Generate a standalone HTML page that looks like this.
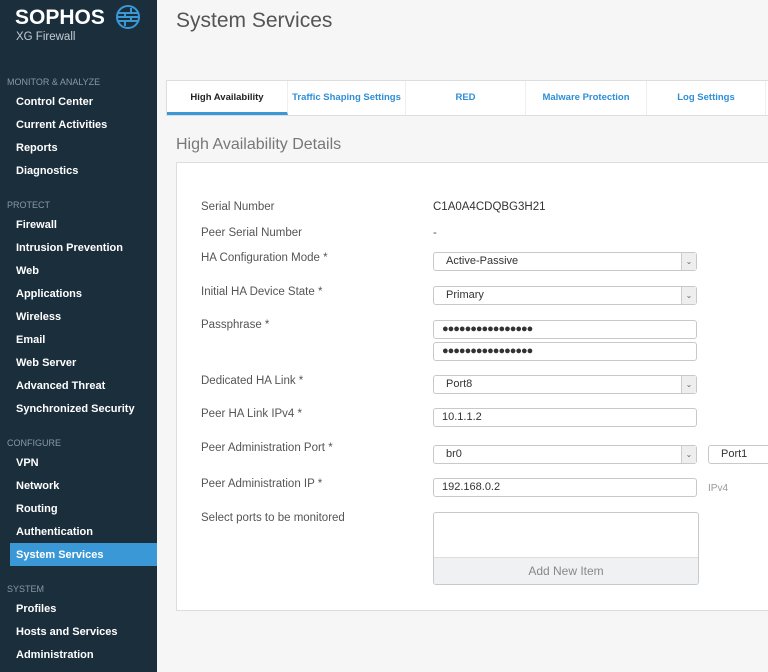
<!DOCTYPE html>
<html><head><style>
*{margin:0;padding:0;box-sizing:border-box}
body{width:768px;height:672px;overflow:hidden;background:#f6f6f6;font-family:"Liberation Sans",sans-serif;position:relative}
#sb{position:absolute;left:0;top:0;width:157px;height:672px;background:#1b2e3c}
.logo{position:absolute;left:15px;top:6px;color:#fff;font-weight:bold;font-size:21px;letter-spacing:0px}
.sub{position:absolute;left:16px;top:31px;color:#c5ccd2;font-size:11.5px}
.sh{position:absolute;left:7px;color:#8a98a4;font-size:9px}
.it{position:absolute;left:16px;color:#fff;font-size:11px;font-weight:bold}
.act{position:absolute;left:10px;top:543px;width:147px;height:23px;background:#3b98d7}
.t{position:absolute;color:#555;font-size:11.5px}
h1{position:absolute;left:176px;top:9px;font-weight:normal;font-size:21px;color:#555}
#tabs{position:absolute;left:166px;top:80px;width:610px;height:36px;background:#fff;border:1px solid #ddd}
.tab{position:absolute;top:0;height:34px;line-height:34px;text-align:center;font-size:9.5px;color:#2e8fd6;font-weight:bold;border-right:1px solid #eee}
h2{position:absolute;left:176px;top:136px;font-weight:normal;font-size:16px;color:#777}
#panel{position:absolute;left:176px;top:162px;width:600px;height:449px;background:#fff;border:1px solid #ddd}
.in{position:absolute;height:19px;border:1px solid #c9c9c9;border-radius:3px;background:#fff;font-size:11px;color:#333;line-height:17px;padding-left:12px}
.in.sel .ar{position:absolute;right:0;top:0;width:15px;height:17px;background:#eee;border-left:1px solid #ccc;font-size:8px;text-align:center;color:#666}
.dots{padding-left:8px;letter-spacing:-1px;font-size:11px}
</style></head><body>
<div id="sb">
<div class="logo">SOPHOS</div>
<svg style="position:absolute;left:115px;top:4px" width="26" height="26" viewBox="0 0 26 26" fill="none" stroke="#3b98d7" stroke-width="2"><circle cx="13" cy="13" r="11"/><path d="M3 9h20M2 13h22M3 17h20M10 9v4M16 13v4M10 17v5M16 4v5"/></svg>
<div class="sub">XG Firewall</div>
<div class="sh" style="top:77px">MONITOR &amp; ANALYZE</div>
<div class="it" style="top:96px">Control Center</div>
<div class="it" style="top:119px">Current Activities</div>
<div class="it" style="top:142px">Reports</div>
<div class="it" style="top:165px">Diagnostics</div>
<div class="sh" style="top:200px">PROTECT</div>
<div class="it" style="top:219px">Firewall</div>
<div class="it" style="top:242px">Intrusion Prevention</div>
<div class="it" style="top:265px">Web</div>
<div class="it" style="top:288px">Applications</div>
<div class="it" style="top:311px">Wireless</div>
<div class="it" style="top:334px">Email</div>
<div class="it" style="top:357px">Web Server</div>
<div class="it" style="top:380px">Advanced Threat</div>
<div class="it" style="top:403px">Synchronized Security</div>
<div class="sh" style="top:438px">CONFIGURE</div>
<div class="it" style="top:457px">VPN</div>
<div class="it" style="top:480px">Network</div>
<div class="it" style="top:503px">Routing</div>
<div class="it" style="top:526px">Authentication</div>
<div class="act"></div>
<div class="it" style="top:549px">System Services</div>
<div class="sh" style="top:584px">SYSTEM</div>
<div class="it" style="top:603px">Profiles</div>
<div class="it" style="top:626px">Hosts and Services</div>
<div class="it" style="top:649px">Administration</div>
</div>
<h1>System Services</h1>
<div id="tabs">
<div class="tab" style="left:0;width:121px;color:#222;border-bottom:3px solid #3b98d7">High Availability</div>
<div class="tab" style="left:121px;width:118px">Traffic Shaping Settings</div>
<div class="tab" style="left:239px;width:120px">RED</div>
<div class="tab" style="left:359px;width:121px">Malware Protection</div>
<div class="tab" style="left:480px;width:119px">Log Settings</div>
</div>
<h2>High Availability Details</h2>
<div id="panel"></div>
<div class="t" style="left:201px;top:201px">Serial Number</div>
<div class="t" style="left:433px;top:201px;color:#333">C1A0A4CDQBG3H21</div>
<div class="t" style="left:201px;top:227px">Peer Serial Number</div>
<div class="t" style="left:433px;top:227px">-</div>
<div class="t" style="left:201px;top:252px">HA Configuration Mode *</div>
<div class="in sel" style="left:433px;top:252px;width:264px">Active-Passive<span class="ar">&#8964;</span></div>
<div class="t" style="left:201px;top:286px">Initial HA Device State *</div>
<div class="in sel" style="left:433px;top:286px;width:264px">Primary<span class="ar">&#8964;</span></div>
<div class="t" style="left:201px;top:319px">Passphrase *</div>
<div class="in dots" style="left:433px;top:320px;width:264px">●●●●●●●●●●●●●●●●</div>
<div class="in dots" style="left:433px;top:342px;width:264px">●●●●●●●●●●●●●●●●</div>
<div class="t" style="left:201px;top:375px">Dedicated HA Link *</div>
<div class="in sel" style="left:433px;top:375px;width:264px">Port8<span class="ar">&#8964;</span></div>
<div class="t" style="left:201px;top:408px">Peer HA Link IPv4 *</div>
<div class="in" style="left:433px;top:408px;width:264px;padding-left:8px">10.1.1.2</div>
<div class="t" style="left:201px;top:442px">Peer Administration Port *</div>
<div class="in sel" style="left:433px;top:445px;width:264px">br0<span class="ar">&#8964;</span></div>
<div class="in" style="left:708px;top:445px;width:70px">Port1</div>
<div class="t" style="left:201px;top:478px">Peer Administration IP *</div>
<div class="in" style="left:433px;top:478px;width:264px;padding-left:8px">192.168.0.2</div>
<div class="t" style="left:708px;top:483px;color:#999;font-size:10px">IPv4</div>
<div class="t" style="left:201px;top:512px">Select ports to be monitored</div>
<div style="position:absolute;left:433px;top:512px;width:266px;height:73px;border:1px solid #c9c9c9;border-radius:3px;background:#fff;overflow:hidden">
<div style="position:absolute;left:0;top:44px;width:100%;height:28px;background:#f0f1f3;border-top:1px solid #ddd;text-align:center;line-height:26px;font-size:12px;color:#888">Add New Item</div></div>
</body></html>
